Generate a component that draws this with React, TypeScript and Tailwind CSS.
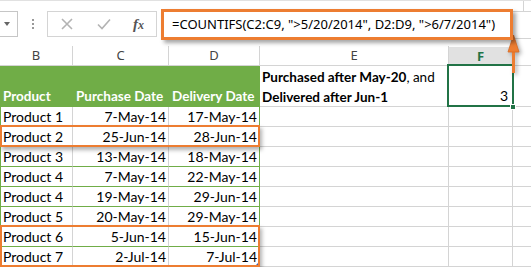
import React from "react";

const rows: [string, string, string][] = [
  ["Product 1", "7-May-14", "17-May-14"],
  ["Product 2", "25-Jun-14", "28-Jun-14"],
  ["Product 3", "13-May-14", "18-May-14"],
  ["Product 4", "7-May-14", "22-May-14"],
  ["Product 4", "19-May-14", "29-Jun-14"],
  ["Product 5", "20-May-14", "29-May-14"],
  ["Product 6", "5-Jun-14", "15-Jun-14"],
  ["Product 7", "2-Jul-14", "7-Jul-14"],
];

const cellFont = { fontFamily: "Lato, 'Noto Sans', sans-serif" };

export default function App() {
  return (
    <div className="relative w-[531px] h-[267px] overflow-hidden bg-white text-black">
      {/* Formula bar */}
      <div className="relative flex items-start h-[46px] border-t border-[#e1e1e1]">
        {/* name box */}
        <div className="mt-[10px] -ml-[11px] w-[29px] h-[26px] border border-[#c6c6c6] bg-white flex items-center justify-end pr-[7px]">
          <div className="w-0 h-0 border-l-[3px] border-r-[3px] border-t-[4px] border-l-transparent border-r-transparent border-t-[#666]" />
        </div>
        {/* dots */}
        <div className="ml-[14px] mt-[18px] flex flex-col gap-[2px]">
          <div className="w-[2px] h-[2px] bg-[#999]" />
          <div className="w-[2px] h-[2px] bg-[#999]" />
          <div className="w-[2px] h-[2px] bg-[#999]" />
        </div>
        {/* cancel/enter/fx */}
        <div className="ml-[13px] mt-[10px] w-[110px] h-[26px] border border-[#d4d4d4] bg-white flex items-center">
          <svg width="12" height="12" viewBox="0 0 12 12" className="ml-[13px]">
            <path d="M1 1 L11 11 M11 1 L1 11" stroke="#b3b3b3" strokeWidth="1.6" fill="none" />
          </svg>
          <svg width="14" height="12" viewBox="0 0 14 12" className="ml-[24px]">
            <path d="M1 6.5 L5 10.5 L13 1.5" stroke="#b3b3b3" strokeWidth="1.6" fill="none" />
          </svg>
          <span
            className="ml-[22px] text-[15px] italic font-bold text-[#555] leading-none"
            style={{ fontFamily: "'Liberation Serif', serif" }}
          >
            f<span className="text-[12px]">x</span>
          </span>
        </div>
        {/* formula box */}
        <div className="ml-[4px] mt-[8px] w-[352px] h-[31px] border-[3px] border-[#ed7d31] bg-white flex items-center pl-[8px] shadow-[3px_3px_4px_rgba(0,0,0,0.35)] relative z-10">
          <span
            className="text-[13px] text-black whitespace-nowrap"
            style={{ fontFamily: "'Noto Sans', sans-serif" }}
          >
            =COUNTIFS(C2:C9, "&gt;5/20/2014", D2:D9, "&gt;6/7/2014")
          </span>
        </div>
        {/* right edge remnants of formula bar */}
        <div className="absolute left-[523px] top-0 w-px h-[10px] bg-[#d4d4d4]" />
        <div className="absolute left-[513px] top-[10px] w-[18px] h-px bg-[#d4d4d4]" />
        <div className="absolute left-[513px] top-[37px] w-[18px] h-px bg-[#d4d4d4]" />
      </div>

      {/* Column headers */}
      <div
        className="flex h-[20px] text-[13px] text-[#444]"
        style={{ fontFamily: "'Noto Sans', sans-serif" }}
      >
        <div className="w-[73px] border-r border-b border-[#d4d4d4] flex items-center justify-center">B</div>
        <div className="w-[96px] border-r border-b border-[#d4d4d4] flex items-center justify-center">C</div>
        <div className="w-[91px] border-r border-b border-[#d4d4d4] flex items-center justify-center">D</div>
        <div className="w-[189px] border-r border-b border-[#d4d4d4] flex items-center justify-center">E</div>
        <div className="w-[64px] mt-px border-r border-[#d4d4d4] bg-[#e1e1e1] flex items-center justify-center font-bold text-[#217346]">F</div>
        <div className="flex-1 border-b border-[#d4d4d4]" />
      </div>

      <div style={cellFont} className="text-[14px]">
        {/* Row 1: table header */}
        <div className="flex h-[41px]">
          <div className="w-[260px] h-[41px] bg-[#70ad47] flex items-end text-white font-bold text-[13.5px] leading-[20px] pb-px">
            <div className="w-[73px] pl-[3px]">Product</div>
            <div className="w-[96px] pl-[3px]">Purchase Date</div>
            <div className="w-[91px] pl-[3px]">Delivery Date</div>
          </div>
          <div className="w-[189px] border-r border-b border-[#d4d4d4] pl-[2px] leading-[20px] pt-[1px] text-[13.5px]">
            <div className="font-bold whitespace-nowrap">
              Purchased after May-20<span className="font-normal">, and</span>
            </div>
            <div className="font-bold whitespace-nowrap">Delivered after Jun-1</div>
          </div>
          <div className="relative w-[64px] border-r border-b border-[#d4d4d4] flex items-end justify-end pr-[4px] leading-[20px]">
            3
          </div>
          <div className="flex-1 border-b border-[#d4d4d4]" />
        </div>

        {/* Data rows */}
        {rows.map((r, i) => (
          <div key={i} className="flex h-[20px] leading-[19px]">
            <div className="w-[73px] border-l border-b border-r border-l-[#70ad47] border-b-[#70ad47] border-r-[#d4d4d4] pl-[2px] whitespace-nowrap">
              {r[0]}
            </div>
            <div className="w-[96px] border-b border-r border-b-[#70ad47] border-r-[#d4d4d4] text-right pr-[2px] whitespace-nowrap">
              {r[1]}
            </div>
            <div className="w-[91px] border-b border-r border-[#70ad47] text-right pr-[2px] whitespace-nowrap">
              {r[2]}
            </div>
            <div className="w-[189px] border-r border-b border-[#d4d4d4]" />
            <div className="w-[64px] border-r border-b border-[#d4d4d4]" />
            <div className="flex-1 border-b border-[#d4d4d4]" />
          </div>
        ))}
      </div>

      {/* Selection box on F1 */}
      <div className="absolute left-[447px] top-[64px] w-[67px] h-[43px] border-2 border-[#217346] pointer-events-none" />
      <div className="absolute left-[510px] top-[104px] w-[6px] h-[6px] bg-[#217346] border border-white" />

      {/* Table resize handle */}
      <div className="absolute left-[255px] top-[262px] w-[4px] h-[4px] bg-[#3a5fa8] [clip-path:polygon(100%_0,100%_100%,0_100%)]" />

      {/* Orange highlight boxes */}
      <div className="absolute left-0 top-[125px] w-[260px] h-[22px] border-2 border-[#ed7d31] shadow-[2px_3px_4px_rgba(0,0,0,0.3)] pointer-events-none" />
      <div className="absolute left-0 top-[225px] w-[260px] h-[42px] border-2 border-[#ed7d31] shadow-[2px_3px_4px_rgba(0,0,0,0.3)] pointer-events-none" />

      {/* Arrow */}
      <svg
        className="absolute left-[503px] top-[33px]"
        width="22"
        height="44"
        viewBox="0 0 22 44"
        style={{ filter: "drop-shadow(2px 2px 2px rgba(0,0,0,0.35))" }}
      >
        <rect x="9" y="16" width="3" height="24" fill="#ed7d31" />
        <polygon points="10.5,2 5,19 16,19" fill="#ed7d31" stroke="#d86a22" strokeWidth="0.8" />
      </svg>
    </div>
  );
}
